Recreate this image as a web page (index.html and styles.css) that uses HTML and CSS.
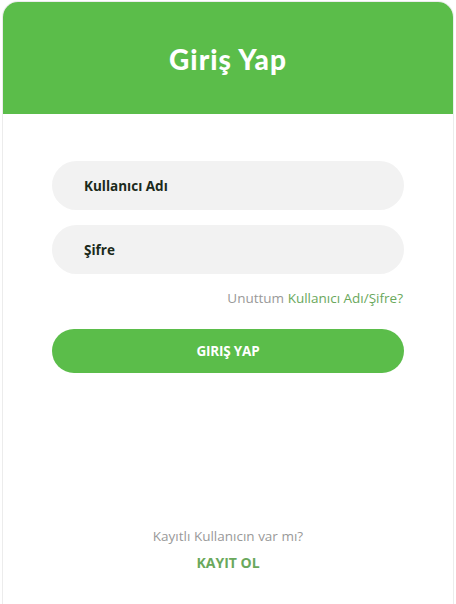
FILE: index.html
```html
<!DOCTYPE html>
<html lang="tr">
<head>
<meta charset="utf-8">
<title>Giriş Yap</title>
<link rel="stylesheet" href="styles.css">
</head>
<body>
<div class="card">
  <header class="card-header">
    <h1 class="title">Giriş Yap</h1>
  </header>
  <main class="card-body">
    <form class="login-form">
      <div class="field">Kullanıcı Adı</div>
      <div class="field">Şifre</div>
      <div class="forgot">Unuttum <a class="link">Kullanıcı Adı/Şifre?</a></div>
      <button class="submit" type="button">GIRIŞ YAP</button>
    </form>
    <div class="register">
      <p class="register-q">Kayıtlı Kullanıcın var mı?</p>
      <a class="register-link">KAYIT OL</a>
    </div>
  </main>
</div>
</body>
</html>
```

FILE: styles.css
```css
html, body {
  margin: 0;
  padding: 0;
  background: #ffffff;
}
body {
  font-family: "Open Sans", "Noto Sans", sans-serif;
  height: 604px;
  overflow: hidden;
}
.card {
  margin: 1px 2px 0 2px;
  height: 603px;
  border: 1px solid #ececec;
  border-bottom: none;
  border-radius: 16px 16px 0 0;
  overflow: hidden;
  display: flex;
  flex-direction: column;
  box-sizing: border-box;
}
.card-header {
  background: #5bbd4a;
  height: 112px;
  display: flex;
  align-items: center;
  justify-content: center;
  flex-shrink: 0;
}
.title {
  margin: 0;
  color: #ffffff;
  font-family: "Lato", sans-serif;
  font-weight: 900;
  font-size: 28px;
  letter-spacing: 1px;
  padding-top: 2px;
}
.card-body {
  flex: 1;
  display: flex;
  flex-direction: column;
  padding: 47px 49px 0 49px;
}
.login-form {
  display: flex;
  flex-direction: column;
}
.field {
  height: 49px;
  border-radius: 25px;
  background: #f2f2f2;
  display: flex;
  align-items: center;
  padding-left: 32px;
  font-weight: 700;
  font-size: 13.5px;
  color: #1b2a1b;
  margin-bottom: 15px;
}
.forgot {
  text-align: right;
  font-size: 13.5px;
  color: #999999;
  margin-top: 1px;
  line-height: 16px;
  padding-right: 1px;
}
.link {
  color: #6aa85c;
}
.submit {
  margin-top: 23px;
  height: 44px;
  border: none;
  border-radius: 22px;
  background: #5bbd4a;
  color: #ffffff;
  font-family: "Open Sans", "Noto Sans", sans-serif;
  font-weight: 700;
  font-size: 13.5px;
  letter-spacing: -0.2px;
  padding: 0;
}
.register {
  margin-top: auto;
  padding-bottom: 32px;
  text-align: center;
}
.register-q {
  margin: 0 0 9px 0;
  font-size: 13.5px;
  color: #999999;
  line-height: 18px;
}
.register-link {
  display: block;
  font-weight: 700;
  font-size: 14px;
  color: #6aa85c;
  line-height: 18px;
}
```
